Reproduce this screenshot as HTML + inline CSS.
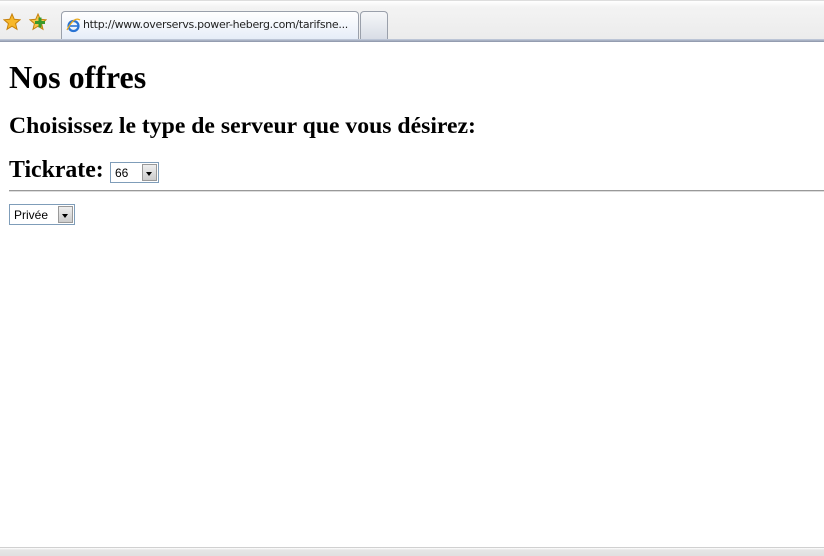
<!DOCTYPE html>
<html><head><meta charset="utf-8"><style>
*{margin:0;padding:0;box-sizing:border-box}
body{width:824px;height:556px;overflow:hidden;background:#fff;font-family:"Liberation Serif",serif;position:relative}
#bar{position:absolute;left:0;top:0;width:824px;height:42px;background:linear-gradient(#fff 0,#f3f3f3 6px,#ececec 38px);border-top:1px solid #ddd}
#bar:after{content:"";position:absolute;left:0;right:0;bottom:0;height:3px;background:linear-gradient(#c6cfe0,#8a93a6)}
.tab{position:absolute;top:10px;height:28px;border:1px solid #9aa0ab;border-bottom:none;border-radius:4px 4px 0 0}
.t1{left:61px;width:298px;background:linear-gradient(#fff,#e6edf8)}
.t2{left:360px;width:28px;background:linear-gradient(#f6f7f9,#d8dde6)}
.t1 span{position:absolute;left:21px;top:6px;font:11px "DejaVu Sans",sans-serif;color:#222;letter-spacing:-0.3px;white-space:nowrap}
.ab{position:absolute;font-family:"Liberation Serif",serif;font-weight:bold;color:#000;white-space:nowrap;line-height:1}
.sel{position:absolute;border:1px solid #7f9db9;background:#fff;font:12px "Liberation Sans",sans-serif;color:#000}
.sel span{position:absolute;left:4px;top:3px}
.sel i{position:absolute;right:1px;top:1px;bottom:1px;width:15px;background:linear-gradient(#eee,#ccc);border:1px solid #999}
.sel i:after{content:"";position:absolute;left:3px;top:7px;border:3.5px solid transparent;border-top:4px solid #000}
</style></head><body>
<div id="bar">
<svg style="position:absolute;left:3px;top:12px" width="18" height="18" viewBox="0 0 18 18"><polygon points="9,1 11.3,6.3 17,6.8 12.6,10.6 14,16.3 9,13.2 4,16.3 5.4,10.6 1,6.8 6.7,6.3" fill="#f7b82a" stroke="#c7820c" stroke-width="1"/></svg>
<svg style="position:absolute;left:29px;top:12px" width="18" height="18" viewBox="0 0 18 18"><polygon points="9,1 11.3,6.3 17,6.8 12.6,10.6 14,16.3 9,13.2 4,16.3 5.4,10.6 1,6.8 6.7,6.3" fill="#f7c64a" stroke="#c7820c" stroke-width="1"/><rect x="6" y="8" width="10" height="3" fill="#3a9a2a"/><rect x="9.5" y="4.5" width="3" height="10" fill="#3a9a2a"/></svg>
<div class="tab t1"><svg style="position:absolute;left:4px;top:6px" width="15" height="15" viewBox="0 0 15 15"><circle cx="7.5" cy="8" r="5" fill="none" stroke="#2a74d4" stroke-width="2.2"/><rect x="3" y="7.2" width="9" height="1.6" fill="#2a74d4"/><path d="M1 12 Q8 -2 14 2" fill="none" stroke="#e8a81c" stroke-width="1.3"/></svg><span>http://www.overservs.power-heberg.com/tarifsne...</span></div>
<div class="tab t2"></div>
</div>
<div class="ab" style="left:9px;top:61px;font-size:32px">Nos offres</div>
<div class="ab" style="left:9px;top:115px;font-size:23.7px">Choisissez le type de serveur que vous désirez:</div>
<div class="ab" style="left:9px;top:159px;font-size:23.8px">Tickrate:</div>
<div class="sel" style="left:110px;top:162px;width:49px;height:21px"><span>66</span><i></i></div>
<div style="position:absolute;left:9px;right:0;top:190px;height:2px;border-top:1px solid #999;border-bottom:1px solid #ddd"></div>
<div class="sel" style="left:9px;top:204px;width:66px;height:21px"><span>Privée</span><i></i></div>
<div style="position:absolute;left:0;right:0;top:547px;height:9px;border-top:1px solid #d0d0d0;background:linear-gradient(#fff,#e6e6e6 2px,#e0e0e0)"></div>
</body></html>
